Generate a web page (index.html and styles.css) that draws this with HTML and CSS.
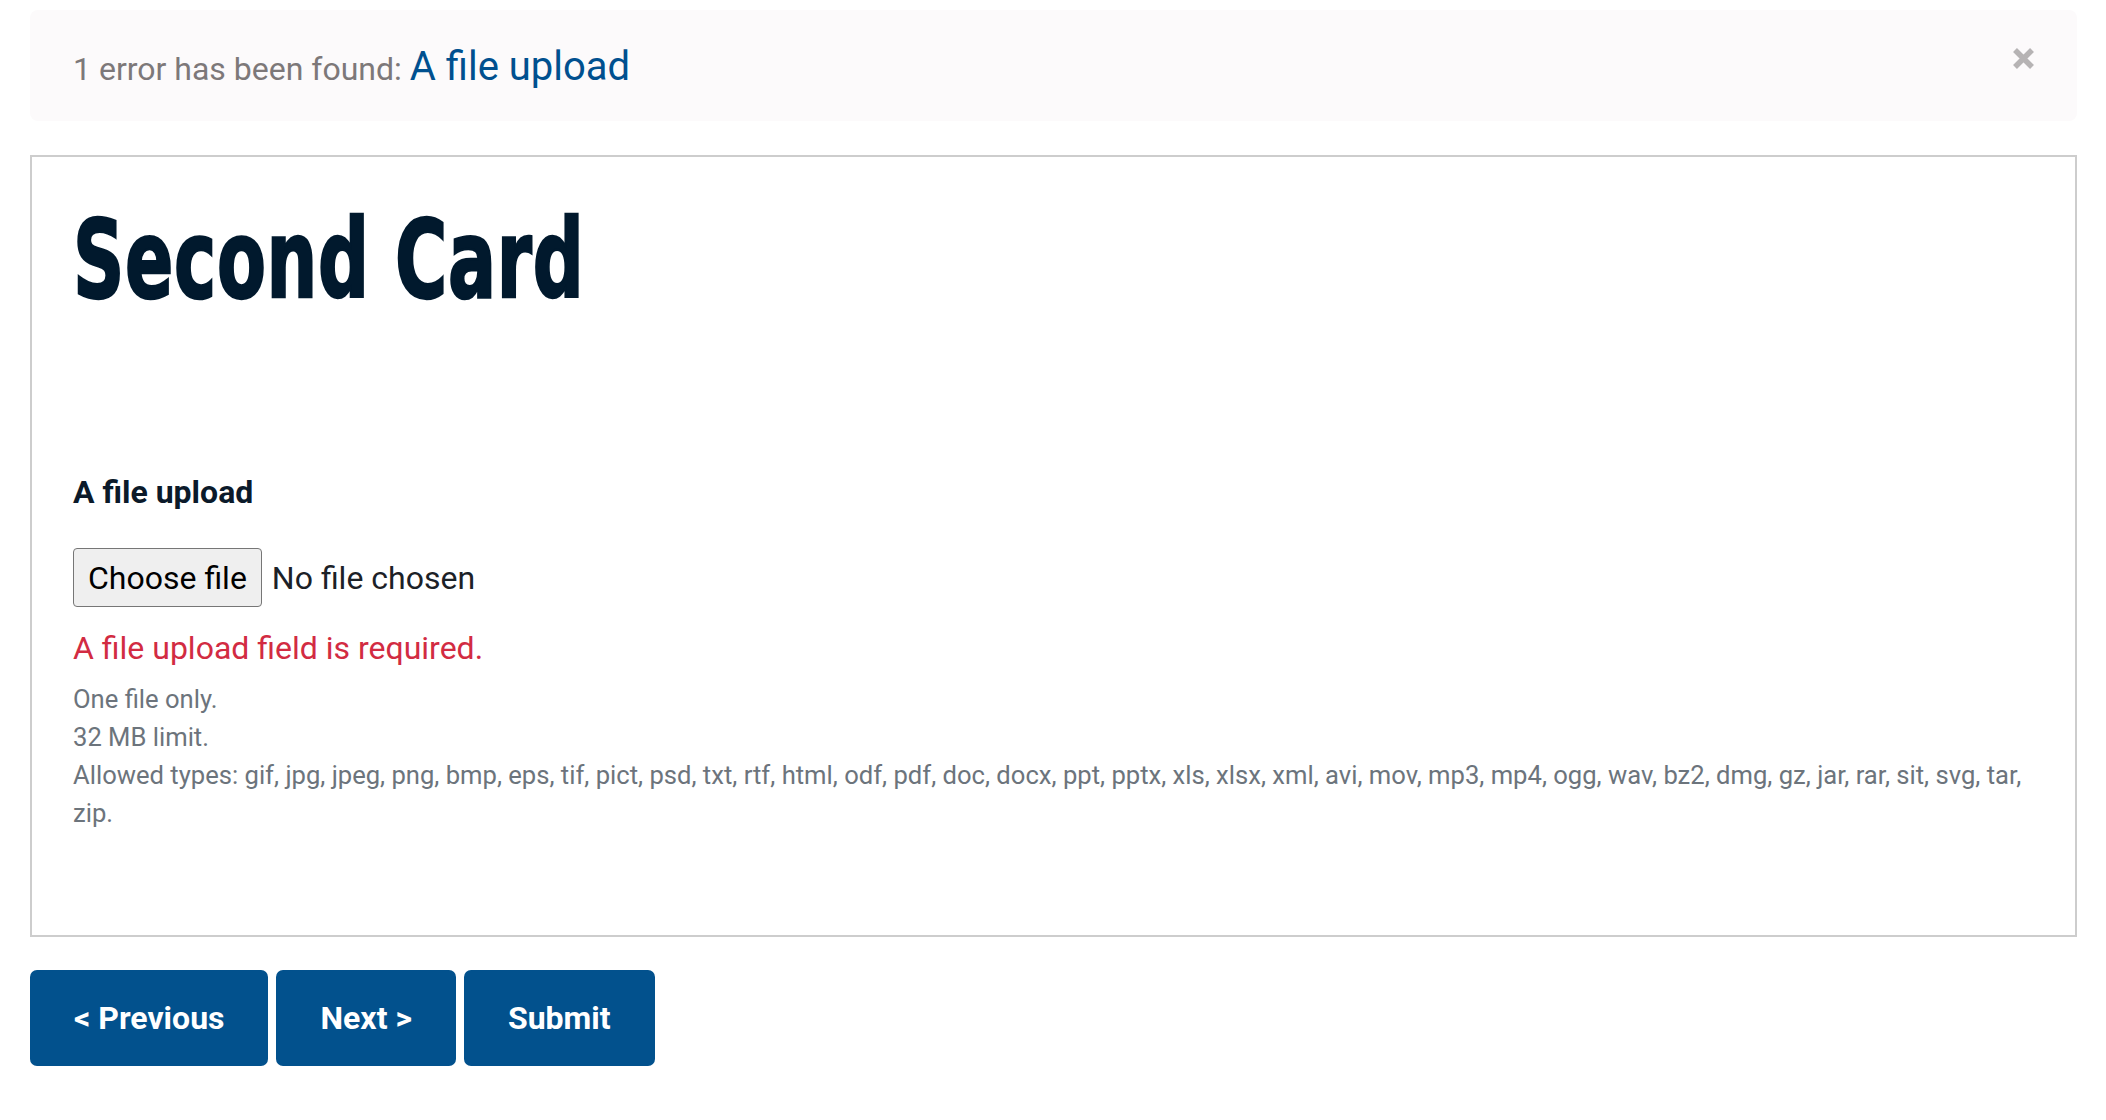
FILE: index.html
```html
<!DOCTYPE html>
<html lang="en">
<head>
<meta charset="utf-8">
<title>Second Card</title>
<link rel="stylesheet" href="styles.css">
</head>
<body>
<div class="page">
  <div class="alert" role="alert">
    <p class="alert-text">1 error has been found: <a class="alert-link" href="#upload">A file upload</a></p>
    <button class="alert-close" type="button" aria-label="Close">
      <svg width="23" height="23" viewBox="0 0 23 23" aria-hidden="true">
        <path d="M3 3 L20 20 M20 3 L3 20" stroke="#b6b3b4" stroke-width="5.5" fill="none"/>
      </svg>
    </button>
  </div>

  <form class="card">
    <h1 class="card-title"><span class="card-title-text">Second Card</span></h1>
    <div class="field-label">A file upload</div>
    <div class="file-field">
      <input class="file-input" type="file" id="upload">
      <label class="file-button" for="upload">Choose file</label>
      <span class="file-status">No file chosen</span>
    </div>
    <p class="field-error">A file upload field is required.</p>
    <div class="field-help">
      <div>One file only.</div>
      <div>32 MB limit.</div>
      <div>Allowed types: gif, jpg, jpeg, png, bmp, eps, tif, pict, psd, txt, rtf, html, odf, pdf, doc, docx, ppt, pptx, xls, xlsx, xml, avi, mov, mp3, mp4, ogg, wav, bz2, dmg, gz, jar, rar, sit, svg, tar, zip.</div>
    </div>
  </form>

  <div class="actions">
    <button class="btn" type="button">&lt; Previous</button>
    <button class="btn" type="button">Next &gt;</button>
    <button class="btn" type="button">Submit</button>
  </div>
</div>
</body>
</html>
```

FILE: styles.css
```css
* { box-sizing: border-box; }

html, body {
  margin: 0;
  padding: 0;
  background: #ffffff;
}

body {
  font-family: Roboto, "Liberation Sans", Arial, sans-serif;
  color: #212529;
}

.page {
  margin: 10px 29px 0 30px;
}

.alert {
  display: flex;
  align-items: center;
  height: 111px;
  padding: 0 42px 0 43px;
  background: #fcfafb;
  border-radius: 8px;
}

.alert-text {
  margin: 0;
  padding-top: 4px;
  font-size: 32px;
  line-height: 48px;
  color: #7d7879;
}

.alert-link {
  font-size: 40px;
  line-height: 48px;
  color: #00508f;
  text-decoration: none;
}

.alert-close {
  margin-left: auto;
  align-self: flex-start;
  margin-top: 37px;
  padding: 0;
  border: 0;
  background: transparent;
  width: 23px;
  height: 23px;
  display: block;
}

.alert-close svg { display: block; }

.card {
  margin-top: 34px;
  border: 2px solid #cdcdcd;
  padding: 48px 41px 103px 41px;
  display: flex;
  flex-direction: column;
  align-items: flex-start;
}

.card-title {
  margin: 0;
  height: 110px;
  font-family: "DejaVu Sans", sans-serif;
  font-weight: bold;
  font-size: 108px;
  line-height: 110px;
  color: #01192d;
  white-space: nowrap;
}

.card-title-text {
  display: inline-block;
  transform: scaleX(0.66);
  transform-origin: 0 50%;
  letter-spacing: 1px;
  -webkit-text-stroke: 2.5px #01192d;
}

.field-label {
  margin-top: 158px;
  font-size: 32px;
  line-height: 38px;
  font-weight: bold;
  color: #0b1a2a;
}

.file-field {
  margin-top: 37px;
  display: flex;
  align-items: center;
  height: 59px;
}

.file-input {
  width: 1px;
  height: 1px;
  margin: 0;
  padding: 0;
  opacity: 0;
  overflow: hidden;
}

.file-button {
  display: flex;
  align-items: center;
  height: 59px;
  padding: 0 14px;
  margin-left: -1px;
  background: #efefef;
  border: 1px solid #767676;
  border-radius: 4px;
  font-size: 32px;
  color: #000000;
  cursor: default;
}

.file-status {
  margin-left: 10px;
  font-size: 32px;
  color: #1c2127;
}

.field-error {
  margin: 22px 0 0 0;
  font-size: 32px;
  line-height: 38px;
  color: #d22b42;
}

.field-help {
  margin-top: 13px;
  font-size: 25.6px;
  line-height: 38px;
  color: #6c747c;
}

.actions {
  display: flex;
  gap: 8px;
  margin-top: 33px;
}

.btn {
  height: 96px;
  padding: 0 44px;
  border: 0;
  border-radius: 7px;
  background: #02518d;
  color: #ffffff;
  font-family: Roboto, "Liberation Sans", Arial, sans-serif;
  font-weight: bold;
  font-size: 32px;
}
```
